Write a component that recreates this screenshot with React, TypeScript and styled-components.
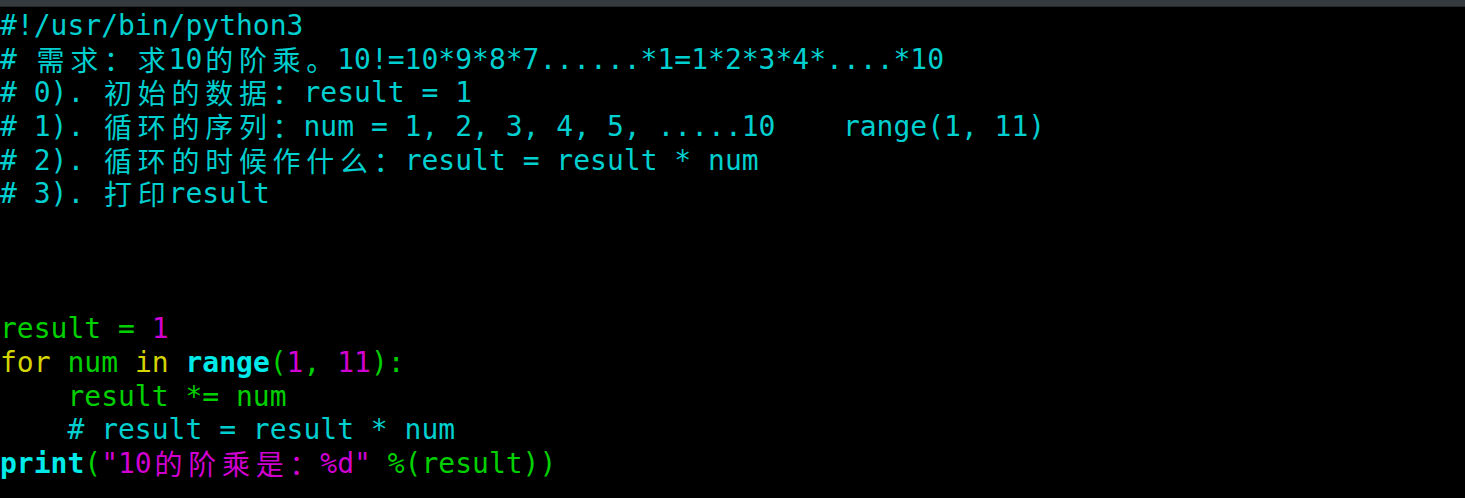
import React from "react";
import styled, { createGlobalStyle } from "styled-components";

const Global = createGlobalStyle`
  html, body {
    margin: 0;
    padding: 0;
    background: #000;
  }
  #root {
    width: 1465px;
    height: 498px;
    overflow: hidden;
  }
`;

const CELL = 16.86;

const Screen = styled.div`
  display: flex;
  flex-direction: column;
  width: 1465px;
  height: 498px;
  background: #000;
`;

const TitleBar = styled.div`
  flex: 0 0 6px;
  background: #343a3d;
  border-bottom: 1px solid #23282b;
`;

const Terminal = styled.pre`
  margin: 0;
  padding: 2px 0 0 0;
  font-family: "DejaVu Sans Mono", "Noto Sans CJK SC", monospace;
  font-size: 28px;
  line-height: 33.7px;
  color: #00cfcf;
  white-space: pre;
`;

const Line = styled.div`
  height: 33.7px;
`;

type Tone = "comment" | "green" | "magenta" | "yellow" | "builtin";

const toneColor: Record<Tone, string> = {
  comment: "#00cfcf",
  green: "#00d000",
  magenta: "#d000d0",
  yellow: "#d4d400",
  builtin: "#00eaea",
};

const Seg = styled.span<{ $tone: Tone }>`
  color: ${(p) => toneColor[p.$tone]};
  font-weight: ${(p) => (p.$tone === "builtin" ? 700 : 400)};
`;

const Wide = styled.span`
  display: inline-block;
  width: ${CELL * 2}px;
  text-align: center;
  font-family: "Noto Sans CJK SC", sans-serif;
  font-weight: 400;
  line-height: 33.7px;
  vertical-align: top;
`;

const renderText = (text: string) => {
  const out: React.ReactNode[] = [];
  let buf = "";
  let k = 0;
  for (const ch of text) {
    if (ch.codePointAt(0)! >= 0x2e80) {
      if (buf) {
        out.push(buf);
        buf = "";
      }
      out.push(<Wide key={k++}>{ch}</Wide>);
    } else {
      buf += ch;
    }
  }
  if (buf) out.push(buf);
  return out;
};

type Segment = [Tone, string];

const lines: Segment[][] = [
  [["comment", "#!/usr/bin/python3"]],
  [["comment", "# 需求：求10的阶乘。10!=10*9*8*7......*1=1*2*3*4*....*10"]],
  [["comment", "# 0). 初始的数据：result = 1"]],
  [["comment", "# 1). 循环的序列：num = 1, 2, 3, 4, 5, .....10    range(1, 11)"]],
  [["comment", "# 2). 循环的时候作什么：result = result * num"]],
  [["comment", "# 3). 打印result"]],
  [],
  [],
  [],
  [
    ["green", "result = "],
    ["magenta", "1"],
  ],
  [
    ["yellow", "for"],
    ["green", " num "],
    ["yellow", "in"],
    ["green", " "],
    ["builtin", "range"],
    ["green", "("],
    ["magenta", "1"],
    ["green", ", "],
    ["magenta", "11"],
    ["green", "):"],
  ],
  [["green", "    result *= num"]],
  [["comment", "    # result = result * num"]],
  [
    ["builtin", "print"],
    ["green", "("],
    ["magenta", "\"10的阶乘是：%d\""],
    ["green", " %(result))"],
  ],
];

export default function App() {
  return (
    <>
      <Global />
      <Screen>
        <TitleBar />
        <Terminal>
          {lines.map((segs, i) => (
            <Line key={i}>
              {segs.map(([tone, text], j) => (
                <Seg key={j} $tone={tone}>
                  {renderText(text)}
                </Seg>
              ))}
            </Line>
          ))}
        </Terminal>
      </Screen>
    </>
  );
}
